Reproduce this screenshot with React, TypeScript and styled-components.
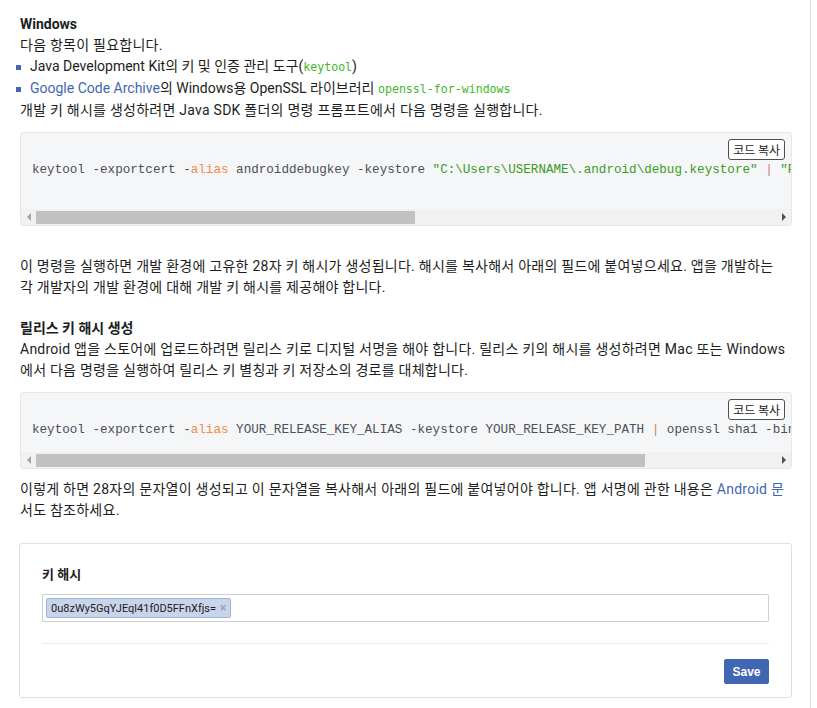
import React from "react";
import styled, { createGlobalStyle } from "styled-components";

const GlobalStyle = createGlobalStyle`
  html, body { margin: 0; padding: 0; background: #ffffff; }
  body {
    font-family: Roboto, "Noto Sans CJK KR", sans-serif;
    color: #1c1e21;
    -webkit-font-smoothing: antialiased;
  }
  * { box-sizing: border-box; }
`;

const Page = styled.div`
  width: 811px;
  min-height: 708px;
  border-right: 1px solid #dddfe2;
  padding: 14px 18px 0 20px;
`;

const Column = styled.div`
  width: 772px;
  display: flex;
  flex-direction: column;
`;

const Para = styled.p<{ $top?: number }>`
  margin: ${(p) => p.$top ?? 0}px 0 0 0;
  font-size: 14px;
  line-height: 21px;
  letter-spacing: 0.25px;
`;

const Heading = styled.p<{ $top?: number }>`
  margin: ${(p) => p.$top ?? 0}px 0 0 0;
  font-size: 14px;
  line-height: 21px;
  font-weight: 700;
`;

const List = styled.ul`
  margin: 0 0 0 -4px;
  padding: 0;
  list-style: none;
`;

const Item = styled.li`
  display: flex;
  align-items: center;
  gap: 9px;
  font-size: 14px;
  line-height: 21px;
`;

const Bullet = styled.span`
  width: 5px;
  height: 5px;
  background: #4267b2;
  flex: none;
`;

const Link = styled.a`
  color: #4267b2;
  text-decoration: none;
`;

const InlineCode = styled.code`
  font-family: "DejaVu Sans Mono", monospace;
  font-size: 11.6px;
  letter-spacing: 0;
  color: #42b72a;
`;

const CodeBlock = styled.div<{ $top?: number }>`
  position: relative;
  margin-top: ${(p) => p.$top ?? 0}px;
  background: #f5f6f7;
  border: 1px solid #e6e7ea;
  border-radius: 3px;
  overflow: hidden;
`;

const Pre = styled.pre<{ $bottom: number }>`
  margin: 0;
  padding: 28px 12px ${(p) => p.$bottom}px 11px;
  font-family: "Liberation Mono", monospace;
  font-size: 12.6px;
  line-height: 18px;
  color: #4b4f56;
  white-space: pre;
  overflow: hidden;
`;

const Tok = styled.span<{ $kind: "kw" | "str" | "op" }>`
  color: ${(p) =>
    p.$kind === "kw" ? "#f08d49" : p.$kind === "str" ? "#3c9a1e" : "#b48a6e"};
`;

const CopyButton = styled.button`
  position: absolute;
  top: 6px;
  right: 6px;
  height: 21px;
  padding: 0 4px;
  background: #ffffff;
  border: 1px solid #4b4f56;
  border-radius: 3px;
  font-family: "Noto Sans CJK KR", sans-serif;
  font-size: 12px;
  line-height: 19px;
  color: #1c1e21;
  cursor: pointer;
`;

const ScrollBar = styled.div`
  display: flex;
  align-items: center;
  height: 16px;
  background: #f1f1f1;
`;

const Arrow = styled.div<{ $dir: "left" | "right"; $on: boolean }>`
  width: 15px;
  height: 16px;
  flex: none;
  display: flex;
  align-items: center;
  justify-content: center;
  &::before {
    content: "";
    width: 0;
    height: 0;
    border-top: 4px solid transparent;
    border-bottom: 4px solid transparent;
    ${(p) =>
      p.$dir === "left"
        ? `border-right: 4px solid ${p.$on ? "#505050" : "#a3a3a3"};`
        : `border-left: 4px solid ${p.$on ? "#505050" : "#a3a3a3"};`}
  }
`;

const Track = styled.div`
  flex: 1;
  height: 16px;
  display: flex;
  align-items: center;
`;

const Thumb = styled.div`
  height: 13px;
  margin-top: 1px;
  background: #c1c1c1;
`;

const Card = styled.div`
  margin-top: 22px;
  margin-left: -1px;
  border: 1px solid #dddfe2;
  border-radius: 3px;
  padding: 22px 22px 13px 22px;
  display: flex;
  flex-direction: column;
`;

const Label = styled.div`
  font-size: 13px;
  line-height: 18px;
  font-weight: 700;
  color: #1c1e21;
`;

const TagInput = styled.div`
  margin-top: 10px;
  height: 28px;
  border: 1px solid #ccd0d5;
  border-radius: 2px;
  padding: 3px;
  display: flex;
  align-items: center;
`;

const Tag = styled.span`
  display: inline-flex;
  align-items: center;
  height: 20px;
  padding: 0 4px;
  background: #c9d4ea;
  border: 1px solid #9cb4d8;
  border-radius: 2px;
  font-family: Roboto, sans-serif;
  font-size: 11px;
  color: #1c1e21;
  gap: 4px;
`;

const TagClose = styled.span`
  color: #9aa3b0;
  font-size: 12px;
  font-weight: 700;
  line-height: 1;
`;

const Divider = styled.div`
  margin-top: 21px;
  height: 1px;
  background: #e9ebee;
`;

const Footer = styled.div`
  margin-top: 15px;
  display: flex;
  justify-content: flex-end;
`;

const SaveButton = styled.button`
  height: 25px;
  width: 45px;
  padding: 0;
  background: #4267b2;
  border: 1px solid #4267b2;
  border-radius: 2px;
  color: #ffffff;
  font-family: "Liberation Sans", Arial, sans-serif;
  font-weight: 700;
  font-size: 12px;
  cursor: pointer;
`;

function Scroller({ ratio }: { ratio: number }) {
  return (
    <ScrollBar>
      <Arrow $dir="left" $on={false} />
      <Track>
        <Thumb style={{ width: `${ratio * 100}%` }} />
      </Track>
      <Arrow $dir="right" $on={true} />
    </ScrollBar>
  );
}

export default function App() {
  return (
    <>
      <GlobalStyle />
      <Page>
        <Column>
          <Heading>Windows</Heading>
          <Para>다음 항목이 필요합니다.</Para>
          <List>
            <Item>
              <Bullet />
              <span>
                Java Development Kit의 키 및 인증 관리 도구(<InlineCode>keytool</InlineCode>)
              </span>
            </Item>
            <Item>
              <Bullet />
              <span>
                <Link href="#">Google Code Archive</Link>의 Windows용 OpenSSL 라이브러리{" "}
                <InlineCode>openssl-for-windows</InlineCode>
              </span>
            </Item>
          </List>
          <Para>개발 키 해시를 생성하려면 Java SDK 폴더의 명령 프롬프트에서 다음 명령을 실행합니다.</Para>

          <CodeBlock $top={11}>
            <CopyButton>코드 복사</CopyButton>
            <Pre $bottom={30}>
              keytool -exportcert -<Tok $kind="kw">alias</Tok> androiddebugkey -keystore{" "}
              <Tok $kind="str">"C:\Users\USERNAME\.android\debug.keystore"</Tok>{" "}
              <Tok $kind="op">|</Tok> <Tok $kind="str">"PATH_TO_OPENSSL_LIBRARY\bin\openssl"</Tok> sha1 -binary{" "}
              <Tok $kind="op">|</Tok> <Tok $kind="str">"PATH_TO_OPENSSL_LIBRARY\bin\openssl"</Tok> base64
            </Pre>
            <Scroller ratio={0.512} />
          </CodeBlock>

          <Para $top={30}>
            이 명령을 실행하면 개발 환경에 고유한 28자 키 해시가 생성됩니다. 해시를 복사해서 아래의 필드에 붙여넣으세요. 앱을 개발하는
            <br />각 개발자의 개발 환경에 대해 개발 키 해시를 제공해야 합니다.
          </Para>

          <Heading $top={20}>릴리스 키 해시 생성</Heading>
          <Para>
            Android 앱을 스토어에 업로드하려면 릴리스 키로 디지털 서명을 해야 합니다. 릴리스 키의 해시를 생성하려면 Mac 또는 Windows
            <br />에서 다음 명령을 실행하여 릴리스 키 별칭과 키 저장소의 경로를 대체합니다.
          </Para>

          <CodeBlock $top={11}>
            <CopyButton>코드 복사</CopyButton>
            <Pre $bottom={13}>
              keytool -exportcert -<Tok $kind="kw">alias</Tok> YOUR_RELEASE_KEY_ALIAS -keystore YOUR_RELEASE_KEY_PATH{" "}
              <Tok $kind="op">|</Tok> openssl sha1 -binary <Tok $kind="op">|</Tok> openssl base64
            </Pre>
            <Scroller ratio={0.823} />
          </CodeBlock>

          <Para $top={10}>
            이렇게 하면 28자의 문자열이 생성되고 이 문자열을 복사해서 아래의 필드에 붙여넣어야 합니다. 앱 서명에 관한 내용은{" "}
            <Link href="#">Android 문</Link>
            <br />
            서도 참조하세요.
          </Para>

          <Card>
            <Label>키 해시</Label>
            <TagInput>
              <Tag>
                0u8zWy5GqYJEql41f0D5FFnXfjs=
                <TagClose>×</TagClose>
              </Tag>
            </TagInput>
            <Divider />
            <Footer>
              <SaveButton>Save</SaveButton>
            </Footer>
          </Card>
        </Column>
      </Page>
    </>
  );
}
